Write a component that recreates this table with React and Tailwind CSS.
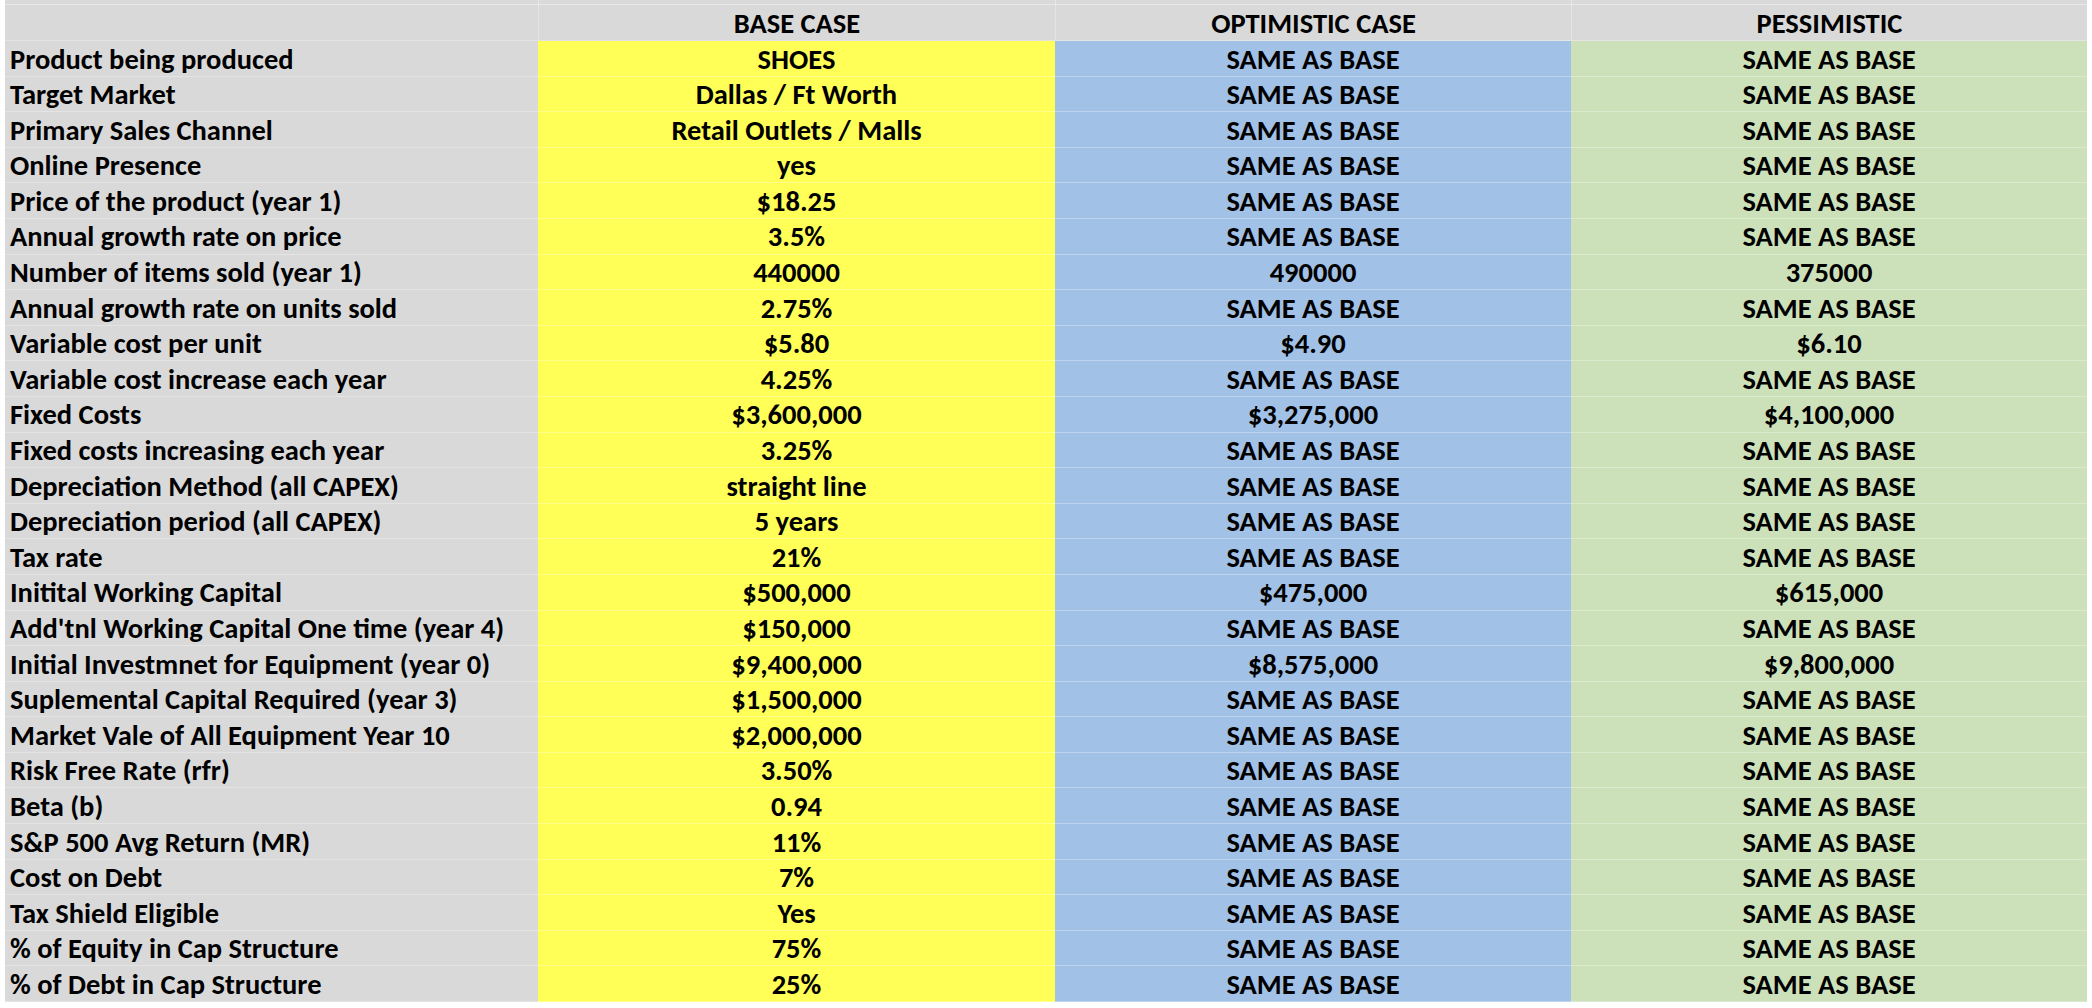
const rows = [
  ['Product being produced', 'SHOES', 'SAME AS BASE', 'SAME AS BASE'],
  ['Target Market', 'Dallas / Ft Worth', 'SAME AS BASE', 'SAME AS BASE'],
  ['Primary Sales Channel', 'Retail Outlets / Malls', 'SAME AS BASE', 'SAME AS BASE'],
  ['Online Presence', 'yes', 'SAME AS BASE', 'SAME AS BASE'],
  ['Price of the product (year 1)', '$18.25', 'SAME AS BASE', 'SAME AS BASE'],
  ['Annual growth rate on price', '3.5%', 'SAME AS BASE', 'SAME AS BASE'],
  ['Number of items sold (year 1)', '440000', '490000', '375000'],
  ['Annual growth rate on units sold', '2.75%', 'SAME AS BASE', 'SAME AS BASE'],
  ['Variable cost per unit', '$5.80', '$4.90', '$6.10'],
  ['Variable cost increase each year', '4.25%', 'SAME AS BASE', 'SAME AS BASE'],
  ['Fixed Costs', '$3,600,000', '$3,275,000', '$4,100,000'],
  ['Fixed costs increasing each year', '3.25%', 'SAME AS BASE', 'SAME AS BASE'],
  ['Depreciation Method (all CAPEX)', 'straight line', 'SAME AS BASE', 'SAME AS BASE'],
  ['Depreciation period (all CAPEX)', '5 years', 'SAME AS BASE', 'SAME AS BASE'],
  ['Tax rate', '21%', 'SAME AS BASE', 'SAME AS BASE'],
  ['Initital Working Capital', '$500,000', '$475,000', '$615,000'],
  ["Add'tnl Working Capital One time (year 4)", '$150,000', 'SAME AS BASE', 'SAME AS BASE'],
  ['Initial Investmnet for Equipment (year 0)', '$9,400,000', '$8,575,000', '$9,800,000'],
  ['Suplemental Capital Required (year 3)', '$1,500,000', 'SAME AS BASE', 'SAME AS BASE'],
  ['Market Vale of All Equipment Year 10', '$2,000,000', 'SAME AS BASE', 'SAME AS BASE'],
  ['Risk Free Rate (rfr)', '3.50%', 'SAME AS BASE', 'SAME AS BASE'],
  ['Beta (b)', '0.94', 'SAME AS BASE', 'SAME AS BASE'],
  ['S&P 500 Avg Return (MR)', '11%', 'SAME AS BASE', 'SAME AS BASE'],
  ['Cost on Debt', '7%', 'SAME AS BASE', 'SAME AS BASE'],
  ['Tax Shield Eligible', 'Yes', 'SAME AS BASE', 'SAME AS BASE'],
  ['% of Equity in Cap Structure', '75%', 'SAME AS BASE', 'SAME AS BASE'],
  ['% of Debt in Cap Structure', '25%', 'SAME AS BASE', 'SAME AS BASE'],
]

const cell = 'h-[35.6px] leading-[35.6px] pt-[0.5px] whitespace-nowrap overflow-visible border-b border-white/30'

export default function App() {
  return (
    <div
      className="min-h-screen bg-white pl-[5px] text-black font-bold text-[28.5px]"
      style={{ fontFamily: 'Carlito, Lato, "Liberation Sans", sans-serif' }}
    >
      <div className="grid w-[2082px] grid-cols-[533px_517px_516px_516px]">
        {/* stub row above header */}
        <div className="h-[5px] bg-[#d9d9d9] border-b border-white/40" />
        <div className="h-[5px] bg-[#d9d9d9] border-b border-l border-white/40" />
        <div className="h-[5px] bg-[#d9d9d9] border-b border-l border-white/40" />
        <div className="h-[5px] bg-[#d9d9d9] border-b border-l border-white/40" />

        {/* header */}
        <div className={`${cell} h-[36px] bg-[#d9d9d9]`} />
        <div className={`${cell} h-[36px] bg-[#d9d9d9] border-l text-center`}>BASE CASE</div>
        <div className={`${cell} h-[36px] bg-[#d9d9d9] border-l text-center`}>OPTIMISTIC CASE</div>
        <div className={`${cell} h-[36px] bg-[#d9d9d9] border-l text-center`}>PESSIMISTIC</div>

        {rows.map(([label, base, opt, pess]) => (
          <div key={label} className="contents">
            <div className={`${cell} bg-[#d9d9d9] pl-[5px]`}>{label}</div>
            <div className={`${cell} bg-[#ffff57] text-center`}>{base}</div>
            <div className={`${cell} bg-[#a2c1e6] text-center`}>{opt}</div>
            <div className={`${cell} bg-[#cce1b9] text-center`}>{pess}</div>
          </div>
        ))}
      </div>
    </div>
  )
}
